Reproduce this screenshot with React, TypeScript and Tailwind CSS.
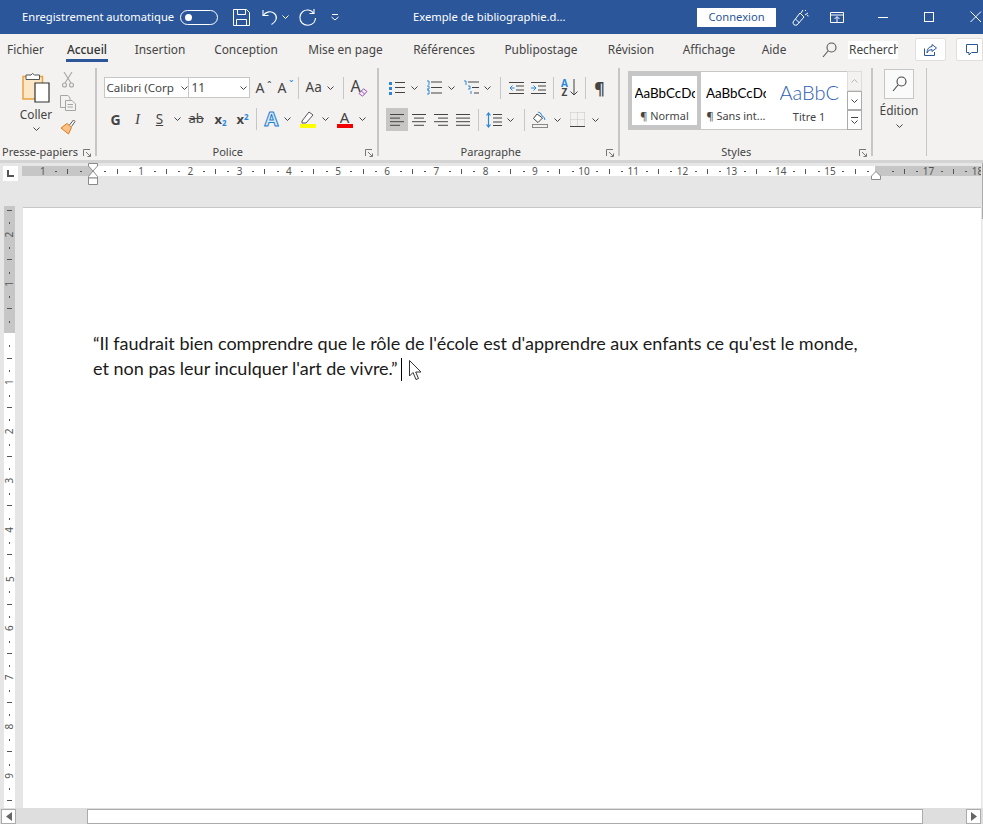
import React from "react";

const ui = { fontFamily: '"Noto Sans", "Open Sans", sans-serif' };
const S = "#444444";

function Chev({ c = S, className = "" }: { c?: string; className?: string }) {
  return (
    <svg width="7" height="4" viewBox="0 0 7 4" className={"shrink-0 " + className} fill="none" stroke={c} strokeWidth="1">
      <path d="M0.5 0.5 L3.5 3.5 L6.5 0.5" />
    </svg>
  );
}

function Sep({ ml, h = "h-[22px]" }: { ml: string; h?: string }) {
  return <div className={`w-px bg-[#c8c6c4] shrink-0 ${h} ${ml}`} />;
}

function Launcher() {
  return (
    <svg width="8" height="8" viewBox="0 0 8 8" className="absolute right-[4px] bottom-[3px]" fill="none" stroke="#777">
      <path d="M0.5 7 V0.5 H7" />
      <path d="M3 3 L7 7 M4.5 7.5 H7.5 V4.5" />
    </svg>
  );
}

function Group({ w, label, launcher = true, children, labelClass = "justify-center" }: { w: string; label?: string; launcher?: boolean; children: React.ReactNode; labelClass?: string }) {
  return (
    <div className={`relative h-full shrink-0 flex flex-col ${w}`}>
      <div className="flex-1 min-h-0">{children}</div>
      <div className={`h-[16px] flex items-center text-[11px] text-[#444] whitespace-nowrap ${labelClass}`}>{label}</div>
      {launcher && <Launcher />}
    </div>
  );
}

function GroupSep() {
  return <div className="w-[1.5px] shrink-0 bg-[#c8c6c4] h-[88px] mt-[3px]" />;
}

function Lines({ rows, w = 14 }: { rows: [number, number][]; w?: number }) {
  return (
    <svg width={w} height="14" viewBox={`0 0 ${w} 14`} className="shrink-0" stroke="#444" strokeWidth="1">
      {rows.map(([a, b], i) => (
        <path key={i} d={`M${a} ${1.5 + i * 3.6} H${b}`} />
      ))}
    </svg>
  );
}

function Tab({ t, cls, active = false }: { t: string; cls: string; active?: boolean }) {
  return (
    <div className={`relative h-full flex items-center justify-center shrink-0 whitespace-nowrap text-[11.9px] ${cls} ${active ? "text-[#333] font-medium" : "text-[#444]"}`}>
      {t}
      {active && <div className="absolute left-0 right-0 top-[25px] h-[3px] bg-[#2b579a]" />}
    </div>
  );
}

function HRuler() {
  const u = 49.2;
  const z = 70;
  const els: React.ReactNode[] = [];
  for (let i = -1; i <= 18; i++) {
    const x = z + i * u;
    if (i !== 0 && i !== 16) {
      els.push(
        <text key={"n" + i} x={x} y="8.5" fontSize="10" fill="#555" textAnchor="middle" fontFamily='"Noto Sans", sans-serif'>
          {Math.abs(i)}
        </text>
      );
    }
    [0.25, 0.5, 0.75].forEach((f) => {
      const p = Math.round(x + f * u);
      if (f === 0.5) els.push(<rect key={`l${i}`} x={p} y="3" width="1" height="5" fill="#555" />);
      else els.push(<rect key={`d${i}${f}`} x={p} y="5" width="2" height="1" fill="#555" />);
    });
  }
  return (
    <svg width="959" height="10" viewBox="0 0 959 10" className="block">
      <rect x="0" y="0" width="70" height="10" fill="#c6c6c6" />
      <rect x="70" y="0" width="783" height="10" fill="#fff" />
      <rect x="853" y="0" width="106" height="10" fill="#c6c6c6" />
      {els}
    </svg>
  );
}

function VRuler() {
  const u = 49.2;
  const z = 127;
  const els: React.ReactNode[] = [];
  for (let i = -2; i <= 9; i++) {
    const y = z + i * u;
    if (i !== 0) {
      els.push(
        <text key={"n" + i} x="5.5" y={y} fontSize="10" fill="#555" textAnchor="middle" dominantBaseline="central" transform={`rotate(-90 5.5 ${y})`} fontFamily='"Noto Sans", sans-serif'>
          {Math.abs(i)}
        </text>
      );
    }
    [0.25, 0.5, 0.75].forEach((f) => {
      const p = Math.round(y + f * u);
      if (f === 0.5) els.push(<rect key={`l${i}`} x="3" y={p} width="5" height="1" fill="#555" />);
      else els.push(<rect key={`d${i}${f}`} x="5" y={p} width="1" height="2" fill="#555" />);
    });
  }
  [0.25, 0.5, 0.75].forEach((f) => {
    const p = Math.round(z + -3 * u + f * u);
    els.push(f === 0.5 ? <rect key={`x${f}`} x="3" y={p} width="5" height="1" fill="#555" /> : <rect key={`x${f}`} x="5" y={p} width="1" height="2" fill="#555" />);
  });
  return (
    <svg width="11" height="602" viewBox="0 0 11 602" className="block">
      <rect x="0" y="0" width="11" height="127" fill="#c6c6c6" />
      <rect x="0" y="127" width="11" height="475" fill="#fff" />
      {els}
    </svg>
  );
}

function Arrow({ dir }: { dir: "l" | "r" }) {
  return (
    <div className="w-[15px] h-[15px] border border-[#ababab] bg-white flex items-center justify-center shrink-0">
      <svg width="6" height="9" viewBox="0 0 6 9" fill="#666">
        <path d={dir === "l" ? "M6 0 L0 4.5 L6 9 Z" : "M0 0 L6 4.5 L0 9 Z"} />
      </svg>
    </div>
  );
}

export default function App() {
  return (
    <div style={ui} className="relative w-[983px] h-[824px] overflow-hidden flex flex-col bg-[#e6e6e6]">
      {/* title bar */}
      <div className="h-[34px] bg-[#2b579a] flex items-center text-white shrink-0 text-[11.2px]">
        <span className="ml-[22px] w-[151px] whitespace-nowrap shrink-0">Enregistrement automatique</span>
        <div className="ml-[7px] w-[38px] h-[15px] rounded-full border border-white flex items-center pl-[4px] shrink-0">
          <div className="w-[7px] h-[7px] rounded-full bg-white" />
        </div>
        <svg width="17" height="17" viewBox="0 0 17 17" className="ml-[15px] shrink-0" fill="none" stroke="#fff">
          <path d="M0.5 0.5 H13.5 L16.5 3.5 V16.5 H0.5 Z" />
          <path d="M4.5 0.5 V5.5 H12.5 V0.5 M3.5 16.5 V10.5 H13.5 V16.5" />
        </svg>
        <svg width="16" height="16" viewBox="0 0 16 16" className="ml-[12px] shrink-0" fill="none" stroke="#fff" strokeWidth="1.1">
          <path d="M1 1 V6.5 H6.5" />
          <path d="M1 6.5 C4 2.5 9 1.5 12.5 4.5 C16 8 14.5 12.5 9.5 15.5" />
        </svg>
        <Chev c="#fff" className="ml-[4px]" />
        <svg width="18" height="18" viewBox="0 0 18 18" className="ml-[10px] shrink-0" fill="none" stroke="#fff" strokeWidth="1.1">
          <path d="M15 1 V5.5 H10.5" />
          <path d="M14.8 5.3 C12 1.5 7 1 3.8 3.5 C0 6.5 0.2 12 3 15 C6 18 12 18 15 14.5 C16 13 16.5 11.5 16.5 10" />
        </svg>
        <svg width="8" height="7" viewBox="0 0 8 7" className="ml-[14px] shrink-0" fill="none" stroke="#fff">
          <path d="M1 0.5 H7 M0.5 3 L4 6 L7.5 3" />
        </svg>
        <span className="ml-[74px] w-[151px] whitespace-nowrap shrink-0">Exemple de bibliographie.d...</span>
        <div className="ml-[133px] w-[79px] h-[19px] bg-white text-[#2b579a] flex items-center justify-center shrink-0">Connexion</div>
        <svg width="17" height="17" viewBox="0 0 17 17" className="ml-[16px] shrink-0" fill="none" stroke="#fff">
          <path d="M1 13 L8 4 L12 8 L5 16 Q1 17 1 13 Z M3.5 10 L7.5 14" />
          <path d="M11 1 L9 4 M13 6 L16 4 M13 1 L14 2 M15 6.5 L16.5 7" />
        </svg>
        <svg width="14" height="11" viewBox="0 0 14 11" className="ml-[21px] shrink-0" fill="none" stroke="#fff">
          <path d="M0.5 0.5 H13.5 V10.5 H0.5 Z M0.5 3 H13.5" />
          <path d="M7 10 V5 M4.5 7 L7 4.5 L9.5 7" />
        </svg>
        <div className="ml-[34px] w-[10px] h-px bg-white shrink-0" />
        <div className="ml-[36px] w-[10px] h-[10px] border border-white shrink-0" />
        <svg width="13" height="12" viewBox="0 0 13 12" className="ml-[36px] shrink-0" stroke="#fff" fill="none">
          <path d="M0.5 0.5 L11 11 M11 0.5 L0.5 11" />
        </svg>
      </div>

      {/* tabs */}
      <div className="h-[31px] bg-[#f3f2f1] flex items-center shrink-0">
        <Tab t="Fichier" cls="ml-[7px] w-[37px]" />
        <Tab t="Accueil" cls="ml-[22px] w-[42px]" active />
        <Tab t="Insertion" cls="ml-[27px] w-[50px]" />
        <Tab t="Conception" cls="ml-[28px] w-[66px]" />
        <Tab t="Mise en page" cls="ml-[27px] w-[79px]" />
        <Tab t="Références" cls="ml-[27px] w-[64px]" />
        <Tab t="Publipostage" cls="ml-[27px] w-[76px]" />
        <Tab t="Révision" cls="ml-[28px] w-[48px]" />
        <Tab t="Affichage" cls="ml-[27px] w-[54px]" />
        <Tab t="Aide" cls="ml-[25px] w-[26px]" />
        <svg width="15" height="16" viewBox="0 0 15 16" className="ml-[35px] shrink-0" fill="none" stroke="#555" strokeWidth="1.1">
          <circle cx="9.5" cy="5.5" r="4.5" />
          <path d="M6 9 L1 15" />
        </svg>
        <div className="ml-[11px] w-[50px] h-[18px] bg-white text-[11.9px] text-[#444] overflow-hidden whitespace-nowrap flex items-center pl-px shrink-0">Recherche</div>
        <div className="ml-[17px] w-[31px] h-[23px] bg-white border border-[#e1dfdd] rounded-[2px] flex items-center justify-center shrink-0">
          <svg width="13" height="12" viewBox="0 0 13 12" fill="none" stroke="#2b579a">
            <path d="M0.5 4.5 V11.5 H10.5 V8" />
            <path d="M8 0.5 L12.5 4 L8 7.5 V5.5 Q4 5.5 3 9 Q3 3 8 2.5 Z" />
          </svg>
        </div>
        <div className="ml-[10px] flex-1 h-[23px] bg-white border border-[#e1dfdd] rounded-l-[2px] flex items-center pl-[9px]">
          <svg width="12" height="12" viewBox="0 0 12 12" fill="none" stroke="#2b579a">
            <path d="M0.5 0.5 H11.5 V8.5 H5.5 L3 11 V8.5 H0.5 Z" />
          </svg>
        </div>
      </div>

      {/* ribbon */}
      <div className="h-[95px] bg-[#f3f2f1] flex shrink-0">
        {/* Presse-papiers */}
        <Group w="w-[95px]" label="Presse-papiers" labelClass="pl-[2px] text-[10.7px]">
          <div className="flex">
            <div className="w-[56px] flex flex-col items-center pl-[16px] shrink-0">
              <svg width="28" height="31" viewBox="0 0 28 31" className="mt-[7px]" fill="none">
                <path d="M1 4.5 H20.5 V27 H1 Z" stroke="#e8a33d" strokeWidth="1.5" fill="#fbe6c6" />
                <path d="M4 3 H9 Q10.5 0 12.5 3 H17.5 V7.5 H4 Z" stroke="#555" fill="#fff" />
                <path d="M13 11 H27 V30 H13 Z" stroke="#333" strokeWidth="1.2" fill="#fff" />
              </svg>
              <span className="text-[11.9px] text-[#444] mt-[3px] leading-[16px]">Coller</span>
              <Chev className="mt-[5px]" />
            </div>
            <div className="flex flex-col items-center w-[16px] ml-[4px] shrink-0">
              <svg width="12" height="16" viewBox="0 0 12 16" className="mt-[7px]" fill="none" stroke="#a6a6a6" strokeWidth="1.1">
                <path d="M2 0 L9 11 M10 0 L3 11" />
                <circle cx="2.5" cy="13" r="2" />
                <circle cx="9.5" cy="13" r="2" />
              </svg>
              <svg width="16" height="16" viewBox="0 0 16 16" className="mt-[7px]" fill="#f3f2f1" stroke="#a6a6a6">
                <path d="M0.5 0.5 H8 L10 3 V12.5 H0.5 Z" />
                <path d="M5.5 5.5 H12 L15.5 9 V15.5 H5.5 Z" />
                <path d="M7.5 9.5 H13 M7.5 12 H13" />
              </svg>
              <svg width="16" height="16" viewBox="0 0 16 16" className="mt-[8px]" fill="none">
                <path d="M9.5 6 L13.5 1 L15 2.5 L11.5 7.5" stroke="#555" fill="#fff" />
                <path d="M7 4.5 L11.5 8.5 L8.5 15 L1 9 Z" fill="#f9c187" stroke="#e07b1a" />
              </svg>
            </div>
          </div>
        </Group>
        <GroupSep />
        {/* Police */}
        <Group w="w-[280.5px]" label="Police" labelClass="justify-center pr-[18px]">
          <div className="flex items-center h-[21px] mt-[12px] pl-[7px]">
            <div className="w-[85px] h-[21px] bg-white border border-[#c8c6c4] flex items-center pl-[2px] text-[11.6px] text-[#444] shrink-0 whitespace-nowrap overflow-hidden">
              <span className="w-[72px] overflow-hidden">Calibri (Corp</span>
              <Chev className="ml-[3px]" />
            </div>
            <div className="w-[61px] h-[21px] bg-white border border-l-0 border-[#c8c6c4] flex items-center pl-[3px] text-[11.9px] text-[#444] shrink-0">
              <span className="w-[48px]">11</span>
              <Chev />
            </div>
            <div className="ml-[6px] w-[16px] text-[14px] text-[#444] shrink-0 relative leading-none">A<span className="absolute right-0 top-[-1px] text-[11px] text-[#555]">ˆ</span></div>
            <div className="ml-[6px] w-[16px] text-[14px] text-[#444] shrink-0 relative leading-none">A<span className="absolute right-0 top-[-2px] text-[11px] text-[#2b88d8]">ˇ</span></div>
            <Sep ml="ml-[4px]" />
            <span className="ml-[7px] w-[18px] text-[13.5px] text-[#444] shrink-0">Aa</span>
            <Chev className="ml-[3px]" />
            <Sep ml="ml-[9px]" />
            <div className="ml-[7px] relative w-[17px] h-[18px] shrink-0 text-[16px] text-[#444] leading-[15px]">
              A
              <svg width="10" height="9" viewBox="0 0 10 9" className="absolute right-0 bottom-0" fill="#f3f2f1" stroke="#9a4fb5">
                <path d="M5.5 0.8 L9 3.5 L4.5 8.2 L1 5.5 Z M3.3 3 L6.7 6" />
              </svg>
            </div>
          </div>
          <div className="flex items-center h-[22px] mt-[10px] text-[#444]">
            <span className="ml-[14px] w-[10px] text-[14px] font-bold text-center shrink-0">G</span>
            <span className="ml-[14px] w-[6px] text-[15px] italic text-center shrink-0" style={{ fontFamily: '"Liberation Serif", serif' }}>I</span>
            <span className="ml-[15px] w-[8px] text-[13.5px] underline text-center shrink-0">S</span>
            <Chev className="ml-[10px]" />
            <span className="ml-[8px] w-[15px] text-[13px] line-through text-center shrink-0">ab</span>
            <span className="ml-[11px] w-[12px] text-[13px] font-bold shrink-0 leading-none">x<sub className="text-[8px] text-[#2b88d8]">2</sub></span>
            <span className="ml-[10px] w-[12px] text-[13px] font-bold shrink-0 leading-none">x<sup className="text-[8px] text-[#2b88d8]">2</sup></span>
            <Sep ml="ml-[7px]" />
            <span className="ml-[8px] w-[14px] text-[20px] font-bold text-[#dcecfa] [-webkit-text-stroke:1px_#1f7fd1] shrink-0 leading-none text-center">A</span>
            <Chev className="ml-[5px]" />
            <svg width="16" height="18" viewBox="0 0 16 18" className="ml-[9px] shrink-0" fill="none">
              <path d="M2 11 L9 2 L13 5 L6 13 L2 13 Z" stroke="#555" fill="#fff" />
              <rect x="0" y="14" width="16" height="4" fill="#ffff00" />
            </svg>
            <Chev className="ml-[6px]" />
            <div className="ml-[8px] w-[16px] h-[18px] relative shrink-0 text-center text-[15px] leading-[14px]">
              A
              <div className="absolute left-0 right-0 bottom-0 h-[4px] bg-[#f00000]" />
            </div>
            <Chev className="ml-[6px]" />
          </div>
        </Group>
        <GroupSep />
        {/* Paragraphe */}
        <Group w="w-[239.5px]" label="Paragraphe" labelClass="justify-center pr-[15px]">
          <div className="flex items-center h-[21px] mt-[12px]">
            <div className="ml-[10px] w-[16px] h-[14px] relative shrink-0">
              <div className="absolute left-0 top-[1px] w-[3px] h-[3px] bg-[#2b88d8]" />
              <div className="absolute left-0 top-[6px] w-[3px] h-[3px] bg-[#2b88d8]" />
              <div className="absolute left-0 top-[11px] w-[3px] h-[3px] bg-[#2b88d8]" />
              <div className="absolute left-[6px] right-0 top-[1px] h-px bg-[#444]" />
              <div className="absolute left-[6px] right-0 top-[6px] h-px bg-[#444]" />
              <div className="absolute left-[6px] right-0 top-[11px] h-px bg-[#444]" />
            </div>
            <Chev className="ml-[6px]" />
            <svg width="16" height="15" viewBox="0 0 16 15" className="ml-[8px] shrink-0" stroke="#444">
              <path d="M5 2 H16 M5 7.5 H16 M5 13 H16" />
              <path d="M1 1 H3 V5 M1 6 H3 V9 H1 M1 10 H3 V14 H1" stroke="#2b88d8" fill="none" />
            </svg>
            <Chev className="ml-[6px]" />
            <svg width="16" height="15" viewBox="0 0 16 15" className="ml-[8px] shrink-0" stroke="#444">
              <path d="M5 2 H16 M9 7.5 H16 M11 13 H16" />
              <path d="M1 1 H3 V5 M5 6 H7 V9 H5 M8 11 V14" stroke="#2b88d8" fill="none" />
            </svg>
            <Chev className="ml-[5px]" />
            <Sep ml="ml-[9px]" />
            <svg width="15" height="12" viewBox="0 0 15 12" className="ml-[8px] shrink-0" fill="none" stroke="#444">
              <path d="M0 0.5 H15 M0 11.5 H15 M7 4 H15 M7 8 H15" />
              <path d="M5.5 6 H1 M3.5 3.5 L1 6 L3.5 8.5" stroke="#2b88d8" />
            </svg>
            <svg width="15" height="12" viewBox="0 0 15 12" className="ml-[7px] shrink-0" fill="none" stroke="#444">
              <path d="M0 0.5 H15 M0 11.5 H15 M7 4 H15 M7 8 H15" />
              <path d="M0 6 H5 M2.5 3.5 L5 6 L2.5 8.5" stroke="#2b88d8" />
            </svg>
            <Sep ml="ml-[7px]" />
            <div className="ml-[7px] w-[8px] h-[18px] flex flex-col items-center text-[10px] leading-[9px] font-bold shrink-0">
              <span className="text-[#2b88d8]">A</span>
              <span className="text-[#444]">Z</span>
            </div>
            <svg width="8" height="17" viewBox="0 0 8 17" className="ml-[1px] shrink-0" fill="none" stroke="#444">
              <path d="M4 0 V16 M0.5 12.5 L4 16 L7.5 12.5" />
            </svg>
            <Sep ml="ml-[7px]" />
            <span className="ml-[8px] w-[12px] text-[16px] font-bold text-[#444] leading-none shrink-0 text-center">¶</span>
          </div>
          <div className="flex items-center h-[23px] mt-[10px]">
            <div className="ml-[7px] w-[22px] h-[23px] bg-[#c8c6c4] flex items-center justify-center shrink-0">
              <Lines rows={[[0, 14], [0, 10], [0, 14], [0, 10]]} />
            </div>
            <div className="ml-[4px] shrink-0"><Lines rows={[[0, 14], [2, 12], [0, 14], [2, 12]]} /></div>
            <div className="ml-[8px] shrink-0"><Lines rows={[[0, 14], [4, 14], [0, 14], [4, 14]]} /></div>
            <div className="ml-[8px] shrink-0"><Lines rows={[[0, 14], [0, 14], [0, 14], [0, 14]]} /></div>
            <Sep ml="ml-[8px]" />
            <svg width="16" height="16" viewBox="0 0 16 16" className="ml-[7px] shrink-0" fill="none">
              <path d="M7 2.5 H16 M7 6 H16 M7 10 H16 M7 13.5 H16" stroke="#444" />
              <path d="M2.5 1 V15 M0.5 3.5 L2.5 1 L4.5 3.5 M0.5 12.5 L2.5 15 L4.5 12.5" stroke="#2b88d8" strokeWidth="1.2" />
            </svg>
            <Chev className="ml-[5px]" />
            <Sep ml="ml-[10px]" />
            <svg width="16" height="17" viewBox="0 0 16 17" className="ml-[7px] shrink-0" fill="none">
              <path d="M5 3 L1.5 7.5 L6 11.5 L10.5 7 Z" stroke="#444" fill="#fff" />
              <path d="M6 1 Q9 1 10 5 Q13 6 13 9" stroke="#2b88d8" />
              <rect x="0.5" y="13.5" width="15" height="3" stroke="#888" fill="#f3f2f1" />
            </svg>
            <Chev className="ml-[6px]" />
            <svg width="15" height="15" viewBox="0 0 15 15" className="ml-[9px] shrink-0" fill="none" stroke="#c4c4c4" strokeDasharray="1 1">
              <path d="M0.5 0.5 H15 M0.5 0.5 V14 M14.5 0.5 V14 M7.5 0.5 V14 M0.5 7.5 H15" />
              <path d="M0 14.5 H15" stroke="#444" strokeDasharray="none" />
            </svg>
            <Chev className="ml-[7px]" />
          </div>
        </Group>
        <GroupSep />
        {/* Styles */}
        <Group w="w-[251.5px]" label="Styles" labelClass="justify-center pr-[18px]">
          <div className="ml-[8.5px] mt-[6px] w-[234px] h-[59px] bg-white border border-[#c8c6c4] flex">
            <div className="w-[73px] h-full border-[4px] border-[#c6c6c6] flex flex-col items-center shrink-0 -ml-px">
              <span className="mt-[9px] text-[13.4px] leading-[16px] text-black whitespace-nowrap w-[60px] overflow-hidden" style={{ fontFamily: '"Lato", sans-serif' }}>AaBbCcDc</span>
              <span className="mt-[8px] text-[10.9px] leading-[14px] text-[#444] whitespace-nowrap">¶ Normal</span>
            </div>
            <div className="ml-[5px] w-[60px] flex flex-col items-center shrink-0">
              <span className="mt-[13px] text-[13.4px] leading-[16px] text-black whitespace-nowrap w-[60px] overflow-hidden" style={{ fontFamily: '"Lato", sans-serif' }}>AaBbCcDc</span>
              <span className="mt-[8px] text-[10.9px] leading-[14px] text-[#444] whitespace-nowrap">¶ Sans int...</span>
            </div>
            <div className="ml-[13px] w-[60px] flex flex-col items-center shrink-0">
              <span className="mt-[7px] text-[20px] font-light leading-[26px] text-[#2f5eb0] whitespace-nowrap w-[59px] overflow-hidden" style={{ fontFamily: '"Lato", sans-serif' }}>AaBbCcDc</span>
              <span className="mt-[5px] text-[10.9px] leading-[14px] text-[#444] whitespace-nowrap">Titre 1</span>
            </div>
            <div className="ml-auto w-[15px] flex flex-col shrink-0 -my-px -mr-px">
              <div className="h-[20px] border border-[#dcdcdc] flex items-center justify-center bg-[#f3f2f1]">
                <svg width="7" height="4" viewBox="0 0 7 4" fill="none" stroke="#b5b5b5"><path d="M0.5 3.5 L3.5 0.5 L6.5 3.5" /></svg>
              </div>
              <div className="h-[19px] border border-[#ababab] flex items-center justify-center"><Chev /></div>
              <div className="h-[20px] border border-[#ababab] flex flex-col items-center justify-center gap-[2px]">
                <div className="w-[7px] h-px bg-[#444]" />
                <Chev />
              </div>
            </div>
          </div>
        </Group>
        <GroupSep />
        {/* Edition */}
        <Group w="w-[53px]" launcher={false}>
          <div className="flex flex-col items-center">
            <div className="mt-[4px] w-[30px] h-[30px] border border-[#c8c6c4] bg-[#fafafa] flex items-center justify-center">
              <svg width="15" height="16" viewBox="0 0 15 16" fill="none" stroke="#444" strokeWidth="1.1">
                <circle cx="9.5" cy="5.5" r="4.5" />
                <path d="M6 9 L1 15" />
              </svg>
            </div>
            <span className="mt-[3px] text-[11.9px] leading-[17px] text-[#444]">Édition</span>
            <Chev className="mt-[5px]" />
          </div>
        </Group>
        <GroupSep />
      </div>
      <div className="h-[3px] bg-[#d4d4d4] shrink-0" />

      {/* ruler row */}
      <div className="h-[44px] flex shrink-0 bg-[#e6e6e6]">
        <div className="ml-[3px] mt-[3px] w-[15px] h-[15px] bg-white flex items-center justify-center shrink-0">
          <svg width="7" height="7" viewBox="0 0 7 7" fill="#555"><path d="M0 0 H2 V5 H7 V7 H0 Z" /></svg>
        </div>
        <div className="ml-[4px] mt-[3px] shrink-0">
          <HRuler />
        </div>
      </div>

      {/* body */}
      <div className="flex-1 min-h-0 flex">
        <div className="w-[23px] pl-[4px] shrink-0 -mt-px">
          <VRuler />
        </div>
        <div className="w-[958px] h-[601px] bg-white border-t border-[#c8c6c4] shrink-0 pl-[70px] pt-[123px]">
          <div className="w-[775px] text-[18px] leading-[25px] text-[#1a1a1a]" style={{ fontFamily: '"Lato", sans-serif' }}>
            “Il faudrait bien comprendre que le rôle de l'école est d'apprendre aux enfants ce qu'est le monde, et non pas leur inculquer l'art de vivre.”
          </div>
        </div>
        <div className="w-px bg-[#e6e6e6] shrink-0" />
        <div className="flex-1 bg-[#f0f0f0]" />
      </div>

      {/* h scrollbar */}
      <div className="h-[16px] flex items-center shrink-0 bg-[#dedede]">
        <div className="ml-px shrink-0"><Arrow dir="l" /></div>
        <div className="ml-[71px] w-[836px] h-[15px] bg-white border border-[#ababab] shrink-0" />
        <div className="ml-[43px] shrink-0"><Arrow dir="r" /></div>
      </div>

      {/* vertical scrollbar thumb, clipped at the window edge */}
      <div className="absolute right-0 top-[163px] w-px h-[56px] bg-[#ababab]" />

      {/* indent markers */}
      <svg width="10" height="22" viewBox="0 0 10 22" className="absolute left-[88px] top-[163px]" fill="#fff" stroke="#8a8a8a">
        <path d="M0.5 0.5 H9.5 V3 L5 8 L0.5 3 Z" />
        <path d="M5 8 L9.5 13.5 V15 H0.5 V13.5 Z" />
        <path d="M0.5 15 H9.5 V21.5 H0.5 Z" />
      </svg>
      <svg width="10" height="9" viewBox="0 0 10 9" className="absolute left-[871px] top-[171px]" fill="#fff" stroke="#8a8a8a">
        <path d="M5 0.5 L9.5 5 V8.5 H0.5 V5 Z" />
      </svg>

      {/* caret */}
      <div className="absolute left-[401px] top-[358px] w-px h-[23px] bg-black" />
      {/* mouse pointer */}
      <svg width="14" height="21" viewBox="0 0 14 21" className="absolute left-[409px] top-[360px]" fill="#fff" stroke="#333">
        <path d="M0.5 0.5 V16 L4 12.5 L7 19.5 L9.5 18.5 L6.7 12 H12 Z" />
      </svg>
    </div>
  );
}
